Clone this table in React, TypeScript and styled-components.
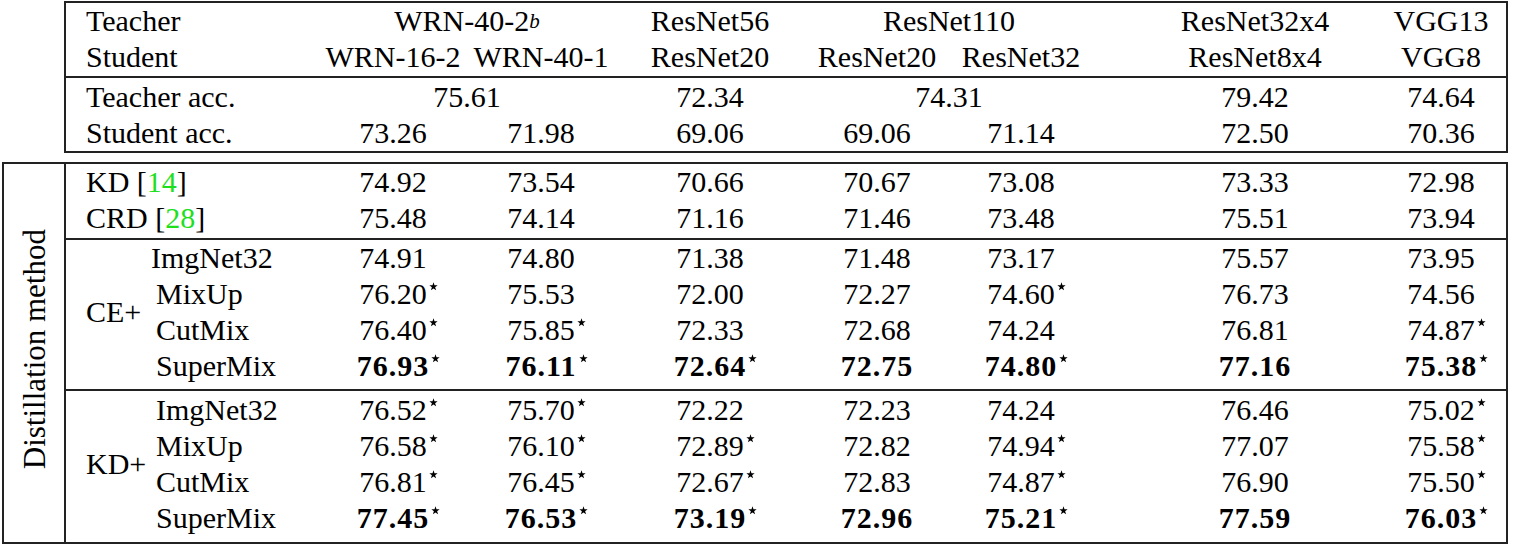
import styled, { createGlobalStyle } from 'styled-components'

const GlobalStyle = createGlobalStyle`
  html, body {
    margin: 0;
    padding: 0;
    background: #fff;
  }
  body {
    font-family: 'Liberation Serif', 'Times New Roman', serif;
    color: #000;
  }
`

// label (group + sub) then the seven model columns
const COLUMNS = '84px 169px 148px 148px 190px 144px 144px 324px 48px'
const RULE = '2px solid #222'
const FONT = '30px'

const Page = styled.div`
  width: 1516px;
  height: 548px;
  box-sizing: border-box;
  padding: 1px 8px 0 2px;
  display: flex;
  flex-direction: column;
  gap: 9px;
`
const TopFrame = styled.div`
  margin-left: 62px;
  border: ${RULE};
`
const BottomFrame = styled.div`
  display: flex;
  border: ${RULE};
`
const MethodAxis = styled.div`
  width: 60px;
  border-right: ${RULE};
  display: flex;
  align-items: center;
  justify-content: center;
`
const AxisLabel = styled.span`
  writing-mode: vertical-rl;
  transform: rotate(180deg);
  font-size: 31px;
  line-height: 1;
  white-space: nowrap;
  margin-bottom: 8px;
`
const Body = styled.div`
  flex: 1;
  display: flex;
  flex-direction: column;
`
const Section = styled.div<{ $padTop?: number; $padBottom?: number }>`
  display: grid;
  grid-template-columns: ${COLUMNS};
  grid-auto-rows: 36px;
  padding: ${(p) => p.$padTop ?? 0}px 0 ${(p) => p.$padBottom ?? 0}px;
  & + & {
    border-top: ${RULE};
  }
`
const Label = styled.div`
  grid-column: 1 / span 2;
  display: flex;
  align-items: center;
  padding-left: 20px;
  font-size: ${FONT};
  white-space: nowrap;
`
const GroupLabel = styled.div`
  grid-column: 1;
  grid-row: 1 / span 4;
  display: flex;
  align-items: center;
  padding-left: 20px;
  font-size: ${FONT};
  white-space: nowrap;
`
const SubLabel = styled.div<{ $shift?: number }>`
  grid-column: 2;
  display: flex;
  align-items: center;
  padding-left: ${(p) => 6 - (p.$shift ?? 0)}px;
  font-size: ${FONT};
  white-space: nowrap;
`
const Cite = styled.span`
  color: #1de01d;
`
const Cell = styled.div<{ $span?: number; $bold?: boolean }>`
  grid-column: span ${(p) => p.$span ?? 1};
  display: flex;
  align-items: center;
  justify-content: center;
  font-size: ${FONT};
  font-weight: ${(p) => (p.$bold ? 700 : 400)};
  letter-spacing: ${(p) => (p.$bold ? '0.035em' : '0')};
  white-space: nowrap;
`
const StarMark = styled.span`
  width: 0;
  align-self: flex-start;
  margin-top: 6px;
  display: flex;
  svg {
    flex: none;
    margin-left: 2px;
  }
`
const Sub = styled.sub`
  font-style: italic;
  font-size: 21px;
  vertical-align: -6px;
  line-height: 0;
`

const Star = () => (
  <StarMark>
    <svg width="9" height="9" viewBox="0 0 10 10">
      <polygon
        points="5,0.3 6.1,3.7 9.6,3.7 6.8,5.8 7.9,9.3 5,7.2 2.1,9.3 3.2,5.8 0.4,3.7 3.9,3.7"
        fill="#000"
      />
    </svg>
  </StarMark>
)

const Value = ({ v, bold }: { v: string; bold?: boolean }) => {
  const star = v.endsWith('*')
  return (
    <Cell $bold={bold}>
      <span>{star ? v.slice(0, -1) : v}</span>
      {star && <Star />}
    </Cell>
  )
}

type Row = { name: string; values: string[]; bold?: boolean }

const baseline: Row[] = [
  { name: 'KD', values: ['74.92', '73.54', '70.66', '70.67', '73.08', '73.33', '72.98'] },
  { name: 'CRD', values: ['75.48', '74.14', '71.16', '71.46', '73.48', '75.51', '73.94'] },
]
const cites: Record<string, string> = { KD: '14', CRD: '28' }

const groups: { name: string; rows: Row[] }[] = [
  {
    name: 'CE+',
    rows: [
      { name: 'ImgNet32', values: ['74.91', '74.80', '71.38', '71.48', '73.17', '75.57', '73.95'] },
      { name: 'MixUp', values: ['76.20*', '75.53', '72.00', '72.27', '74.60*', '76.73', '74.56'] },
      { name: 'CutMix', values: ['76.40*', '75.85*', '72.33', '72.68', '74.24', '76.81', '74.87*'] },
      {
        name: 'SuperMix',
        bold: true,
        values: ['76.93*', '76.11*', '72.64*', '72.75', '74.80*', '77.16', '75.38*'],
      },
    ],
  },
  {
    name: 'KD+',
    rows: [
      { name: 'ImgNet32', values: ['76.52*', '75.70*', '72.22', '72.23', '74.24', '76.46', '75.02*'] },
      { name: 'MixUp', values: ['76.58*', '76.10*', '72.89*', '72.82', '74.94*', '77.07', '75.58*'] },
      { name: 'CutMix', values: ['76.81*', '76.45*', '72.67*', '72.83', '74.87*', '76.90', '75.50*'] },
      {
        name: 'SuperMix',
        bold: true,
        values: ['77.45*', '76.53*', '73.19*', '72.96', '75.21*', '77.59', '76.03*'],
      },
    ],
  },
]

const App = () => {
  return (
    <>
      <GlobalStyle />
      <Page>
        <TopFrame>
          <Section $padTop={0} $padBottom={1}>
            <Label>Teacher</Label>
            <Cell $span={2}>
              WRN-40-2<Sub>b</Sub>
            </Cell>
            <Cell>ResNet56</Cell>
            <Cell $span={2}>ResNet110</Cell>
            <Cell>ResNet32x4</Cell>
            <Cell>VGG13</Cell>
            <Label>Student</Label>
            {['WRN-16-2', 'WRN-40-1', 'ResNet20', 'ResNet20', 'ResNet32', 'ResNet8x4', 'VGG8'].map(
              (s, i) => (
                <Cell key={i}>{s}</Cell>
              ),
            )}
          </Section>
          <Section $padTop={1}>
            <Label>Teacher acc.</Label>
            <Cell $span={2}>75.61</Cell>
            <Cell>72.34</Cell>
            <Cell $span={2}>74.31</Cell>
            <Cell>79.42</Cell>
            <Cell>74.64</Cell>
            <Label>Student acc.</Label>
            {['73.26', '71.98', '69.06', '69.06', '71.14', '72.50', '70.36'].map((s, i) => (
              <Cell key={i}>{s}</Cell>
            ))}
          </Section>
        </TopFrame>

        <BottomFrame>
          <MethodAxis>
            <AxisLabel>Distillation method</AxisLabel>
          </MethodAxis>
          <Body>
            <Section $padBottom={2}>
              {baseline.map((r) => [
                <Label key={r.name}>
                  {r.name} [<Cite>{cites[r.name]}</Cite>]
                </Label>,
                ...r.values.map((v, i) => <Value key={`${r.name}-${i}`} v={v} />),
              ])}
            </Section>
            {groups.map((g, gi) => (
              <Section key={g.name} $padTop={gi} $padBottom={gi ? 6 : 5}>
                <GroupLabel>{g.name}</GroupLabel>
                {g.rows.map((r, ri) => [
                  <SubLabel key={r.name} $shift={gi === 0 && ri === 0 ? 5 : 0}>
                    {r.name}
                  </SubLabel>,
                  ...r.values.map((v, i) => <Value key={`${r.name}-${i}`} v={v} bold={r.bold} />),
                ])}
              </Section>
            ))}
          </Body>
        </BottomFrame>
      </Page>
    </>
  )
}

export default App
